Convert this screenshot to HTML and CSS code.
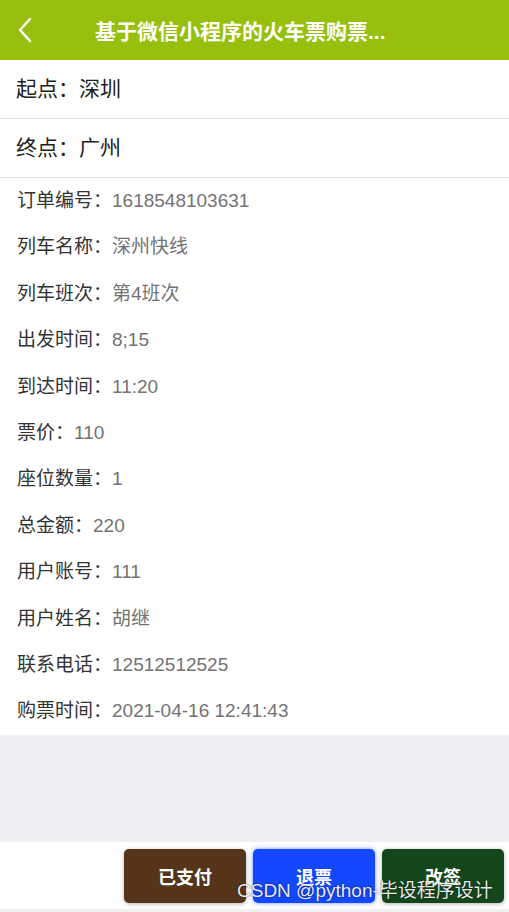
FILE: index.html
```html
<!DOCTYPE html>
<html lang="zh">
  <head>
    <meta charset="UTF-8" />
    <meta name="viewport" content="width=device-width, initial-scale=1.0" />
    <title>订单详情</title>
    <link rel="stylesheet" href="styles.css">
  </head>
  <body>
    <div class="page">
      <div class="nav">
        <div class="back">
          <svg width="16" height="26" viewBox="0 0 16 26">
            <path d="M13 2 L3 13 L13 24" fill="none" stroke="#fff" stroke-width="2.4" stroke-linecap="round" stroke-linejoin="round" />
          </svg>
        </div>
        <div class="title">基于微信小程序的火车票购票...</div>
        <div></div>
      </div>

      <div class="place">起点：深圳</div>
      <div class="place">终点：广州</div>

      <div class="info">
        <div class="row"><span class="label">订单编号：</span><span class="value">1618548103631</span></div>
        <div class="row"><span class="label">列车名称：</span><span class="value">深州快线</span></div>
        <div class="row"><span class="label">列车班次：</span><span class="value">第4班次</span></div>
        <div class="row"><span class="label">出发时间：</span><span class="value">8;15</span></div>
        <div class="row"><span class="label">到达时间：</span><span class="value">11:20</span></div>
        <div class="row"><span class="label">票价：</span><span class="value">110</span></div>
        <div class="row"><span class="label">座位数量：</span><span class="value">1</span></div>
        <div class="row"><span class="label">总金额：</span><span class="value">220</span></div>
        <div class="row"><span class="label">用户账号：</span><span class="value">111</span></div>
        <div class="row"><span class="label">用户姓名：</span><span class="value">胡继</span></div>
        <div class="row"><span class="label">联系电话：</span><span class="value">12512512525</span></div>
        <div class="row"><span class="label">购票时间：</span><span class="value">2021-04-16 12:41:43</span></div>
      </div>

      <div class="spacer"></div>

      <div class="bottom">
        <button class="btn btn-paid">已支付</button>
        <button class="btn btn-refund">退票</button>
        <button class="btn btn-change">改签</button>
        <div class="watermark">CSDN @python-毕设程序设计</div>
      </div>
    </div>
  </body>
</html>
```

FILE: styles.css
```css
html,
body {
  margin: 0;
  padding: 0;
  height: 100%;
}
body {
  font-family: "Liberation Sans", "Noto Sans CJK SC", sans-serif;
  background: #efeff4;
  color: #333;
}
.page {
  display: flex;
  flex-direction: column;
  height: 912px;
}
.nav {
  height: 60px;
  flex: none;
  background: #97bf0d;
  display: grid;
  grid-template-columns: 95px 1fr 60px;
  align-items: center;
}
.back {
  padding-left: 17px;
  display: flex;
  align-items: center;
}
.title {
  color: white;
  font-size: 21px;
  font-weight: bold;
  white-space: nowrap;
  overflow: hidden;
  text-overflow: ellipsis;
}
.place {
  flex: none;
  height: 58px;
  line-height: 58px;
  background: white;
  padding-left: 16px;
  font-size: 21px;
  color: #222;
  border-bottom: 1px solid #e3e3e3;
}
.info {
  flex: none;
  background: white;
  padding-left: 17px;
}
.row {
  height: 46.4px;
  line-height: 46.4px;
  font-size: 19px;
  white-space: nowrap;
}
.label {
  color: #333;
}
.value {
  color: #737373;
}
.spacer {
  flex: 1;
}
.bottom {
  flex: none;
  position: relative;
  height: 67px;
  margin-bottom: 3px;
  background: white;
  display: flex;
  justify-content: flex-end;
  align-items: center;
  gap: 7px;
  padding-right: 5px;
}
.btn {
  width: 122px;
  height: 54px;
  border: none;
  border-radius: 5px;
  color: white;
  font-family: inherit;
  font-size: 18px;
  font-weight: bold;
  box-shadow: 0 1px 4px rgba(0, 0, 0, 0.3);
}
.btn-paid {
  background: #55341a;
}
.btn-refund {
  background: #1448ff;
  box-shadow: 0 0 4px rgba(20, 72, 255, 0.6);
}
.btn-change {
  background: #14461c;
}
.watermark {
  position: absolute;
  left: 237px;
  top: 33px;
  font-size: 19px;
  color: rgba(255, 255, 255, 0.92);
  text-shadow: 0 0 2px rgba(0, 0, 0, 0.7);
  white-space: nowrap;
}
```
